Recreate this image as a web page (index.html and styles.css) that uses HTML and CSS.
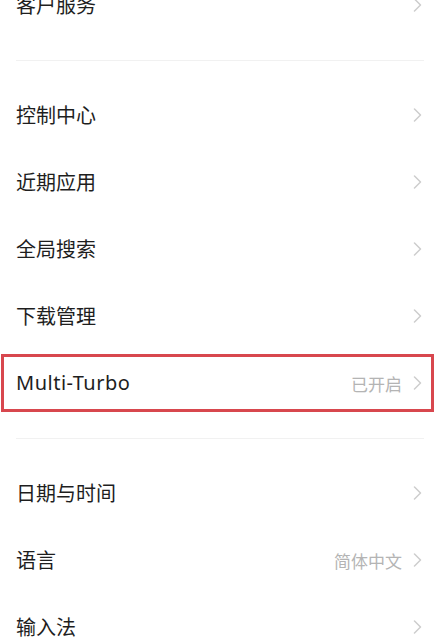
FILE: index.html
```html
<!DOCTYPE html>
<html lang="zh-CN">
<head>
<meta charset="utf-8">
<title>设置</title>
<link rel="stylesheet" href="styles.css">
</head>
<body>
<div class="screen">
  <section class="group">
    <div class="row"><span class="label">客户服务</span><span class="trail"><svg class="chev" viewBox="0 0 9 14" width="9" height="14"><path d="M1.5 1 L7.5 7 L1.5 13"/></svg></span></div>
  </section>
  <div class="divider"></div>
  <section class="group">
    <div class="row"><span class="label">控制中心</span><span class="trail"><svg class="chev" viewBox="0 0 9 14" width="9" height="14"><path d="M1.5 1 L7.5 7 L1.5 13"/></svg></span></div>
    <div class="row"><span class="label">近期应用</span><span class="trail"><svg class="chev" viewBox="0 0 9 14" width="9" height="14"><path d="M1.5 1 L7.5 7 L1.5 13"/></svg></span></div>
    <div class="row"><span class="label">全局搜索</span><span class="trail"><svg class="chev" viewBox="0 0 9 14" width="9" height="14"><path d="M1.5 1 L7.5 7 L1.5 13"/></svg></span></div>
    <div class="row"><span class="label">下载管理</span><span class="trail"><svg class="chev" viewBox="0 0 9 14" width="9" height="14"><path d="M1.5 1 L7.5 7 L1.5 13"/></svg></span></div>
    <div class="row highlighted"><span class="label latin">Multi-Turbo</span><span class="trail"><span class="value">已开启</span><svg class="chev" viewBox="0 0 9 14" width="9" height="14"><path d="M1.5 1 L7.5 7 L1.5 13"/></svg></span></div>
  </section>
  <div class="divider"></div>
  <section class="group">
    <div class="row"><span class="label">日期与时间</span><span class="trail"><svg class="chev" viewBox="0 0 9 14" width="9" height="14"><path d="M1.5 1 L7.5 7 L1.5 13"/></svg></span></div>
    <div class="row"><span class="label">语言</span><span class="trail"><span class="value">简体中文</span><svg class="chev" viewBox="0 0 9 14" width="9" height="14"><path d="M1.5 1 L7.5 7 L1.5 13"/></svg></span></div>
    <div class="row"><span class="label">输入法</span><span class="trail"><svg class="chev" viewBox="0 0 9 14" width="9" height="14"><path d="M1.5 1 L7.5 7 L1.5 13"/></svg></span></div>
  </section>
</div>
</body>
</html>
```
FILE: styles.css
```css
html, body {
  margin: 0;
  padding: 0;
  background: #ffffff;
  overflow: hidden;
}
body {
  font-family: "Noto Sans", "Noto Sans CJK SC", sans-serif;
  color: #1e1e1e;
}
.screen {
  margin-top: -28.5px;
  display: flex;
  flex-direction: column;
}
.group {
  display: flex;
  flex-direction: column;
}
.row {
  position: relative;
  height: 67px;
  display: flex;
  align-items: center;
  justify-content: space-between;
  padding: 0 14px 0 16px;
}
.label {
  font-family: "Noto Sans CJK SC", sans-serif;
  font-size: 20px;
  line-height: 1;
  color: #1e1e1e;
}
.label.latin {
  font-family: "Noto Sans", "Noto Sans CJK SC", sans-serif;
  letter-spacing: 0.5px;
}
.trail {
  display: flex;
  align-items: center;
  gap: 11px;
}
.value {
  font-family: "Noto Sans CJK SC", sans-serif;
  font-size: 17px;
  line-height: 1;
  color: #b4b4b4;
}
.chev {
  display: block;
  fill: none;
  stroke: #cdcdcd;
  stroke-width: 1.5;
  stroke-linecap: round;
  stroke-linejoin: round;
}
.divider {
  height: 1px;
  margin: 21px 12px 21px 16px;
  background: #f1f1f1;
}
.highlighted::after {
  content: "";
  position: absolute;
  left: 1px;
  right: 2px;
  top: 4.5px;
  bottom: 4.5px;
  border: 3.5px solid #d8474e;
  pointer-events: none;
}
```
